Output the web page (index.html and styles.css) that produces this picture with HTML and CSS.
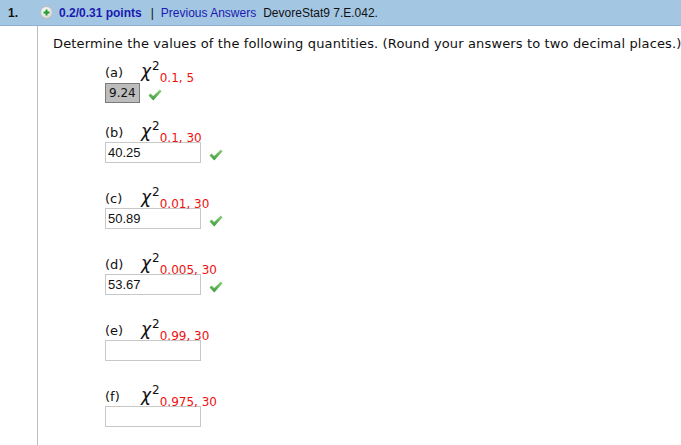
FILE: index.html
```html
<!DOCTYPE html>
<html>
<head>
<meta charset="utf-8">
<link rel="stylesheet" href="styles.css">
</head>
<body>
<svg width="0" height="0" class="defs"><defs><linearGradient id="c1" x1="0" y1="0" x2="0" y2="1"><stop offset="0" stop-color="#8fd07f"/><stop offset="1" stop-color="#3d9a3a"/></linearGradient><radialGradient id="g" cx="0.4" cy="0.35" r="0.7"><stop offset="0" stop-color="#ffffff"/><stop offset="1" stop-color="#d4d4d4"/></radialGradient></defs></svg>
<div class="header">
  <span class="qnum">1.</span>
  <span class="plus"><svg width="13" height="13" viewBox="0 0 13 13"><circle cx="6.5" cy="6.5" r="6" fill="url(#g)" stroke="#b8b8b8" stroke-width="0.8"/><path d="M6.5 3.5v6M3.5 6.5h6" stroke="#1e9a2c" stroke-width="2"/></svg></span>
  <span class="points">0.2/0.31 points</span>
  <span class="sep">|</span>
  <span class="prev">Previous Answers</span>
  <span class="src">DevoreStat9 7.E.042.</span>
</div>
<div class="main">
  <div class="gutter"></div>
  <div class="content">
    <p class="prompt">Determine the values of the following quantities. (Round your answers to two decimal places.)</p>
    <div class="items">
      <div class="item first">
        <div class="label"><span class="letter">(a)</span><span class="chi">χ<sup>2</sup></span><span class="sub">0.1, 5</span></div>
        <div class="answer"><span class="filled">9.24</span><svg class="check" width="14" height="12" viewBox="0 0 14 12"><path d="M0.5 6.5 L2.5 4.6 L5.2 7.1 L11.8 0.5 L13.6 2.2 L5.3 11.4 Z" fill="url(#c1)"/></svg></div>
      </div>
      <div class="item second">
        <div class="label"><span class="letter">(b)</span><span class="chi">χ<sup>2</sup></span><span class="sub">0.1, 30</span></div>
        <div class="answer"><span class="box">40.25</span><svg class="check" width="14" height="12" viewBox="0 0 14 12"><path d="M0.5 6.5 L2.5 4.6 L5.2 7.1 L11.8 0.5 L13.6 2.2 L5.3 11.4 Z" fill="url(#c1)"/></svg></div>
      </div>
      <div class="item">
        <div class="label"><span class="letter">(c)</span><span class="chi">χ<sup>2</sup></span><span class="sub">0.01, 30</span></div>
        <div class="answer"><span class="box">50.89</span><svg class="check" width="14" height="12" viewBox="0 0 14 12"><path d="M0.5 6.5 L2.5 4.6 L5.2 7.1 L11.8 0.5 L13.6 2.2 L5.3 11.4 Z" fill="url(#c1)"/></svg></div>
      </div>
      <div class="item">
        <div class="label"><span class="letter">(d)</span><span class="chi">χ<sup>2</sup></span><span class="sub">0.005, 30</span></div>
        <div class="answer"><span class="box">53.67</span><svg class="check" width="14" height="12" viewBox="0 0 14 12"><path d="M0.5 6.5 L2.5 4.6 L5.2 7.1 L11.8 0.5 L13.6 2.2 L5.3 11.4 Z" fill="url(#c1)"/></svg></div>
      </div>
      <div class="item">
        <div class="label"><span class="letter">(e)</span><span class="chi">χ<sup>2</sup></span><span class="sub">0.99, 30</span></div>
        <div class="answer"><span class="box"></span></div>
      </div>
      <div class="item">
        <div class="label"><span class="letter">(f)</span><span class="chi">χ<sup>2</sup></span><span class="sub">0.975, 30</span></div>
        <div class="answer"><span class="box"></span></div>
      </div>
    </div>
  </div>
</div>
</body>
</html>
```

FILE: styles.css
```css
html, body {
  margin: 0;
  padding: 0;
  background: #ffffff;
}
body {
  font-family: "Liberation Sans", Arial, sans-serif;
  width: 681px;
  height: 445px;
  overflow: hidden;
}
.defs {
  display: block;
  width: 0;
  height: 0;
}
.header {
  height: 26px;
  background: #a3c6e3;
  border-bottom: 1px solid #8fb2d0;
  display: flex;
  align-items: center;
  font-size: 12px;
  box-sizing: border-box;
}
.qnum {
  font-weight: bold;
  color: #111;
  margin-left: 8px;
  width: 32px;
}
.plus {
  display: flex;
  width: 13px;
  height: 13px;
  margin-right: 6px;
}
.points {
  color: #1a1ab0;
  font-weight: bold;
}
.sep {
  color: #111;
  margin-left: 9px;
  margin-right: 7px;
}
.prev {
  color: #1a1ab0;
}
.src {
  color: #111;
  margin-left: 7px;
}
.main {
  display: flex;
  height: 419px;
}
.gutter {
  width: 37px;
  border-right: 1px solid #bdbdbd;
  flex: none;
}
.content {
  padding-left: 15px;
  font-family: "DejaVu Sans", Verdana, sans-serif;
  color: #111;
}
.prompt {
  margin: 10px 0 0 0;
  font-size: 13px;
  line-height: 16px;
  letter-spacing: 0.14px;
  white-space: nowrap;
}
.items {
  margin-left: 52px;
  margin-top: 9px;
  display: flex;
  flex-direction: column;
}
.item {
  display: flex;
  flex-direction: column;
  padding-top: 24px;
}
.item.first {
  padding-top: 0;
}
.item.second {
  padding-top: 18px;
}
.label {
  display: flex;
  align-items: baseline;
  height: 21px;
  font-size: 13px;
  line-height: 21px;
}
.letter {
  width: 36px;
}
.chi {
  font-family: "DejaVu Sans", sans-serif;
  font-style: italic;
  font-size: 17px;
}
.chi sup {
  font-size: 12px;
  line-height: 0;
  vertical-align: 7px;
  font-style: normal;
  margin-left: 1px;
}
.sub {
  color: #ee1111;
  font-size: 12px;
  position: relative;
  top: 5px;
}
.answer {
  display: flex;
  align-items: center;
  height: 21px;
}
.filled {
  box-sizing: border-box;
  height: 20px;
  padding: 0 3px;
  background: #bdbdbd;
  border: 1px solid #7a7a7a;
  font-size: 12px;
  display: flex;
  align-items: center;
}
.box {
  box-sizing: border-box;
  width: 96px;
  height: 21px;
  border: 1px solid #c8c8c8;
  background: #fff;
  font-family: "Liberation Sans", Arial, sans-serif;
  font-size: 13px;
  padding-left: 2px;
  display: flex;
  align-items: center;
}
.check {
  margin-left: 8px;
  margin-top: 4px;
}
```
